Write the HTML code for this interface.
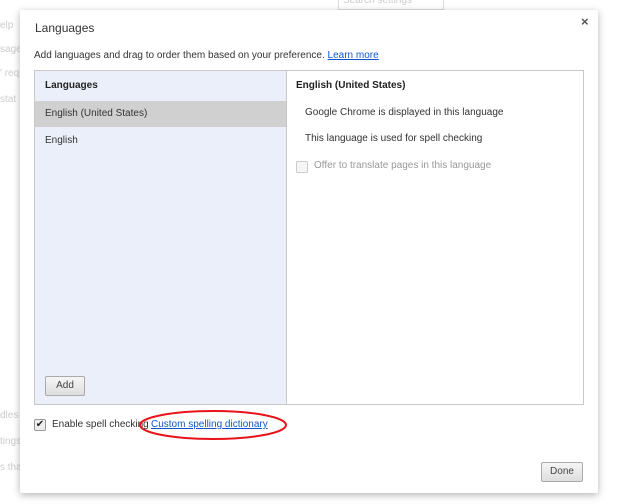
<!DOCTYPE html>
<html><head><meta charset="utf-8"><style>
body{margin:0;width:620px;height:504px;background:#fff;position:relative;overflow:hidden;font-family:"Liberation Sans",sans-serif;font-size:10px;color:#333}
.bg{position:absolute;color:#ccc;font-size:10px}
.dlg{position:absolute;left:20px;top:10px;width:578px;height:483px;background:#fff;box-shadow:0 2px 8px rgba(0,0,0,.3);border-radius:2px}
.a{position:absolute;white-space:nowrap}
a{color:#15c;text-decoration:underline}
.btn{position:absolute;border:1px solid #aaa;border-radius:2px;background:linear-gradient(#f6f6f6,#dedede);text-align:center;color:#444;box-sizing:border-box}
</style></head><body>
<div class="bg" style="left:0;top:20px">elp</div>
<div class="bg" style="left:0;top:44px">sage</div>
<div class="bg" style="left:0;top:68px">' req</div>
<div class="bg" style="left:0;top:94px">stat</div>
<div class="bg" style="left:0;top:410px">dles</div>
<div class="bg" style="left:0;top:436px">tings</div>
<div class="bg" style="left:0;top:462px">s tha</div>
<div style="position:absolute;left:338px;top:-6px;width:100px;height:14px;border:1px solid #ddd;background:#fff;color:#ccc;font-size:10px;padding-left:4px">Search settings</div>
<div class="dlg">
 <div class="a" style="left:15px;top:11px;font-size:12px;color:#333">Languages</div>
 <div class="a" style="left:561px;top:4px;font-size:13px;font-weight:bold;color:#555">×</div>
 <div class="a" style="left:14px;top:40px">Add languages and drag to order them based on your preference. <a>Learn more</a></div>
 <div style="position:absolute;left:14px;top:60px;width:548px;height:333px;border:1px solid #c8c8c8"></div>
 <div style="position:absolute;left:15px;top:61px;width:251px;height:333px;background:#ebeffa;border-right:1px solid #c8c8c8"></div>
 <div style="position:absolute;left:15px;top:91px;width:251px;height:26px;background:#d0d0d0"></div>
 <div class="a" style="left:25px;top:70px;font-weight:bold;color:#222">Languages</div>
 <div class="a" style="left:25px;top:98px">English (United States)</div>
 <div class="a" style="left:25px;top:125px">English</div>
 <div class="btn" style="left:25px;top:366px;width:40px;height:20px;line-height:18px">Add</div>
 <div class="a" style="left:276px;top:70px;font-weight:bold;color:#222">English (United States)</div>
 <div class="a" style="left:285px;top:97px">Google Chrome is displayed in this language</div>
 <div class="a" style="left:285px;top:123px">This language is used for spell checking</div>
 <div style="position:absolute;left:276px;top:151px;width:10px;height:10px;border:1px solid #ccc;border-radius:2px;background:#f6f6f6"></div>
 <div class="a" style="left:294px;top:150px;color:#999">Offer to translate pages in this language</div>
 <div style="position:absolute;left:14px;top:409px;width:10px;height:10px;border:1px solid #999;border-radius:2px;background:#eee;font-size:10px;line-height:10px;text-align:center;color:#222">✔</div>
 <div class="a" style="left:32px;top:409px">Enable spell checking</div>
 <div class="a" style="left:131px;top:409px"><a>Custom spelling dictionary</a></div>
 <svg style="position:absolute;left:0;top:0" width="578" height="483"><ellipse cx="193" cy="415" rx="73" ry="14" fill="none" stroke="#e8131b" stroke-width="2"/></svg>
 <div class="btn" style="left:521px;top:452px;width:42px;height:20px;line-height:18px">Done</div>
</div>
</body></html>
